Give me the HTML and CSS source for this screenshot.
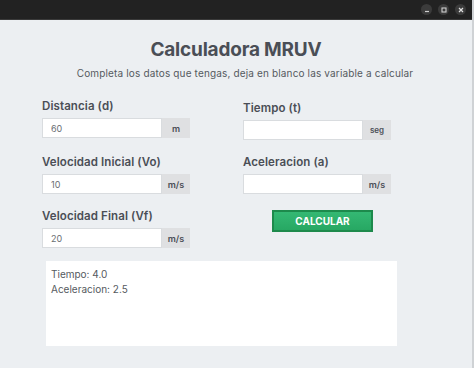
FILE: index.html
```html
<!DOCTYPE html>
<html lang="es">
<head>
<meta charset="utf-8">
<title>Calculadora MRUV</title>
<link rel="stylesheet" href="styles.css">
</head>
<body>
<div class="window">
  <div class="titlebar">
    <div class="controls">
      <span class="ctl"><svg width="10" height="10" viewBox="0 0 10 10"><path d="M3 6.5h4" stroke="#cfcfcf" stroke-width="1.2"/></svg></span>
      <span class="ctl"><svg width="10" height="10" viewBox="0 0 10 10"><rect x="3" y="3" width="4" height="4" fill="none" stroke="#cfcfcf" stroke-width="1.1"/></svg></span>
      <span class="ctl"><svg width="10" height="10" viewBox="0 0 10 10"><path d="M3 3l4 4M7 3l-4 4" stroke="#e0e0e0" stroke-width="1.2"/></svg></span>
    </div>
  </div>
  <main class="app">
    <h1 class="title">Calculadora MRUV</h1>
    <p class="subtitle">Completa los datos que tengas, deja en blanco las variable a calcular</p>
    <div class="form">
      <div class="field">
        <label class="label">Distancia (d)</label>
        <div class="group"><input class="input" value="60"><span class="unit">m</span></div>
      </div>
      <div class="field field-right-first">
        <label class="label">Tiempo (t)</label>
        <div class="group"><input class="input" value=""><span class="unit unit-sm">seg</span></div>
      </div>
      <div class="field">
        <label class="label">Velocidad Inicial (Vo)</label>
        <div class="group"><input class="input" value="10"><span class="unit">m/s</span></div>
      </div>
      <div class="field">
        <label class="label">Aceleracion (a)</label>
        <div class="group"><input class="input" value=""><span class="unit">m/s</span></div>
      </div>
      <div class="field">
        <label class="label">Velocidad Final (Vf)</label>
        <div class="group"><input class="input" value="20"><span class="unit">m/s</span></div>
      </div>
      <div class="action">
        <button class="btn">CALCULAR</button>
      </div>
    </div>
    <div class="results">
      <div class="line">Tiempo: 4.0</div>
      <div class="line">Aceleracion: 2.5</div>
    </div>
  </main>
</div>
</body>
</html>
```

FILE: styles.css
```css
* { box-sizing: border-box; }
html, body { margin: 0; padding: 0; }
body {
  width: 474px;
  height: 368px;
  overflow: hidden;
  background: #eceff2;
  font-family: Inter, "Noto Sans", sans-serif;
  color: #4b5058;
}
.window {
  height: 368px;
  display: flex;
  flex-direction: column;
  border-right: 2px solid #cfd2d5;
}
.titlebar {
  height: 20px;
  background: #222222;
  border-bottom: 1px solid #3a3a3a;
  display: flex;
  justify-content: flex-end;
  align-items: center;
  padding-right: 6px;
  flex: none;
}
.controls { display: flex; gap: 6px; align-items: center; }
.ctl {
  width: 11px;
  height: 11px;
  border-radius: 50%;
  background: #3b3b3b;
  display: flex;
  align-items: center;
  justify-content: center;
}
.ctl svg { display: block; }
.app {
  flex: 1;
  padding: 17px 0 0 42px;
  background: #eceff2;
}
.title {
  margin: 0 0 0 -42px;
  font-size: 19px;
  line-height: 26px;
  font-weight: 700;
  text-align: center;
  color: #4a4e56;
  letter-spacing: -0.2px;
}
.subtitle {
  margin: 2px 0 0 -24px;
  font-size: 10px;
  line-height: 16px;
  text-align: center;
  color: #555a60;
  letter-spacing: 0.15px;
}
.form {
  margin-top: 17px;
  display: grid;
  grid-template-columns: 201px 201px;
  row-gap: 14px;
}
.field {
  display: flex;
  flex-direction: column;
  gap: 3px;
}
.field-right-first { margin-top: 2px; }
.label {
  font-size: 11.5px;
  line-height: 17px;
  font-weight: 600;
  color: #4a4e56;
  letter-spacing: 0.1px;
}
.group { display: flex; height: 20px; }
.input {
  width: 120px;
  height: 20px;
  border: 1px solid #d9dcdf;
  background: #ffffff;
  padding: 0 0 0 8px;
  font-family: inherit;
  font-size: 9px;
  color: #6a6e73;
  outline: none;
}
.unit {
  width: 28px;
  height: 20px;
  background: #dfe0e2;
  font-size: 9px;
  font-weight: 600;
  color: #4a4e56;
  display: flex;
  align-items: center;
  justify-content: center;
}
.unit-sm { font-size: 8px; }
.action { padding: 1px 0 0 29px; }
.btn {
  width: 101px;
  height: 22px;
  background: linear-gradient(#34b873, #27a863);
  border: 2px solid #1d8a4c;
  color: #ffffff;
  font-family: Inter, "Noto Sans", sans-serif;
  font-size: 10px;
  font-weight: 700;
  padding: 0;
}
.results {
  margin: 13px 0 0 4px;
  width: 351px;
  height: 85px;
  background: #ffffff;
  padding: 6px 5px;
}
.line {
  font-size: 10px;
  line-height: 15px;
  color: #555a60;
}
```
